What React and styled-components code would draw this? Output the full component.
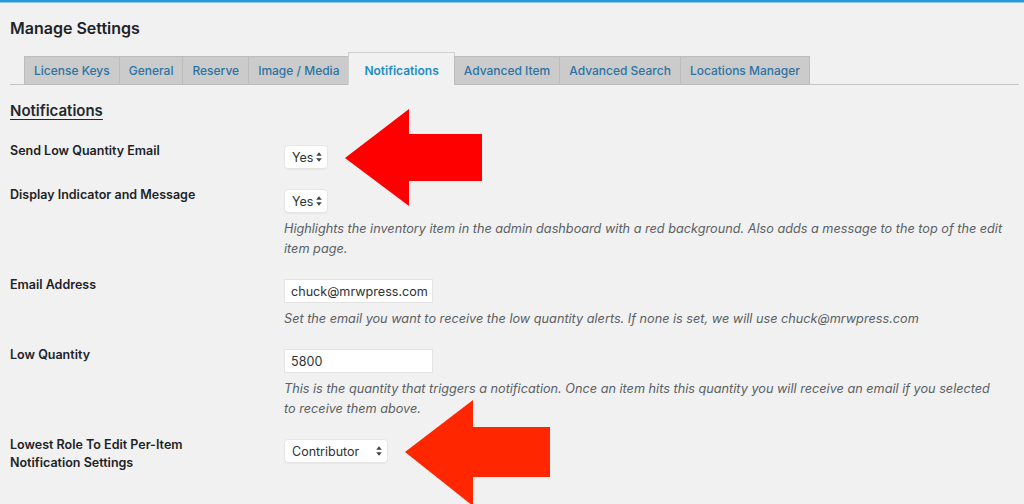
import React from "react";
import styled, { createGlobalStyle } from "styled-components";

const Global = createGlobalStyle`
  html, body { margin: 0; padding: 0; background: #f1f1f1; }
  body { font-family: Inter, "Noto Sans", Arial, sans-serif; color: #23282d; }
  * { box-sizing: border-box; }
`;

const Page = styled.div`
  position: relative;
  width: 1024px;
  height: 504px;
  overflow: hidden;
  background: #f1f1f1;
`;

const TopBar = styled.div`
  height: 3px;
  background: #2a98d6;
  border-bottom: 1px solid #8ec8ea;
`;

const Content = styled.div`
  padding: 0 5px 0 10px;
`;

const Title = styled.h1`
  margin: 15px 0 0;
  font-size: 16px;
  line-height: 20px;
  font-weight: 600;
  color: #1d2327;
`;

const TabBar = styled.nav`
  display: flex;
  align-items: flex-end;
  margin-top: 14px;
  padding-left: 14px;
  border-bottom: 1px solid #c5c5c5;
`;

const Tab = styled.a`
  display: flex;
  align-items: center;
  justify-content: center;
  height: ${(p) => (p.$active ? "33px" : "29px")};
  padding: ${(p) => (p.$active ? "4px 15px 0" : "0 9px")};
  margin-bottom: -1px;
  margin-left: -1px;
  border: 1px solid ${(p) => (p.$active ? "#d0d0d0" : "#bcbcbc")};
  border-bottom-color: ${(p) => (p.$active ? "#f1f1f1" : "#bcbcbc")};
  background: ${(p) => (p.$active ? "#f1f1f1" : "#cbcbcb")};
  color: ${(p) => (p.$active ? "#1e8cc6" : "#2b73a3")};
  font-size: 12px;
  font-weight: ${(p) => (p.$active ? 600 : 500)};
  text-decoration: none;
  white-space: nowrap;
  &:first-child { margin-left: 0; }
`;

const SectionTitle = styled.h2`
  margin: 16px 0 0;
  font-size: 15px;
  line-height: 20px;
  font-weight: 600;
  text-decoration: underline;
  text-underline-offset: 3px;
  color: #23282d;
`;

const Form = styled.div`
  margin-top: 14px;
`;

const Row = styled.div`
  display: grid;
  grid-template-columns: 274px 1fr;
  padding: 10px 0;
`;

const Label = styled.div`
  margin-top: -3px;
  font-size: 12.5px;
  line-height: 18px;
  font-weight: 600;
  color: #1d2327;
`;

const Field = styled.div`
  display: flex;
  flex-direction: column;
  align-items: flex-start;
`;

const Select = styled.div`
  display: flex;
  align-items: center;
  justify-content: space-between;
  gap: 3px;
  min-width: ${(p) => p.$width}px;
  height: 24px;
  padding: 0 5px 0 7px;
  background: #fff;
  border: 1px solid #e6e6e6;
  border-radius: 4px;
  box-shadow: 0 1px 1px rgba(0, 0, 0, 0.04);
  font-size: 12.5px;
  color: #2c3338;
`;

const Input = styled.div`
  display: flex;
  align-items: center;
  width: 149px;
  height: 24px;
  padding: 0 6px;
  background: #fff;
  border: 1px solid #e4e4e4;
  font-size: 12.6px;
  color: #2c3338;
`;

const Description = styled.p`
  margin: 6px 0 0;
  max-width: 730px;
  font-size: 12.7px;
  line-height: 20px;
  font-style: italic;
  color: #5a5f64;
`;

const Arrow = styled.svg`
  position: absolute;
  left: ${(p) => p.$x}px;
  top: ${(p) => p.$y}px;
`;

const Updown = () => (
  <svg width="6" height="10" viewBox="0 0 6 10">
    <path d="M3 0.3 L5.8 3.8 H0.2 Z" fill="#3c434a" />
    <path d="M3 9.7 L5.8 6.2 H0.2 Z" fill="#3c434a" />
  </svg>
);

const tabs = [
  "License Keys",
  "General",
  "Reserve",
  "Image / Media",
  "Notifications",
  "Advanced Item",
  "Advanced Search",
  "Locations Manager",
];

export default function App() {
  return (
    <>
      <Global />
      <Page>
        <TopBar />
        <Content>
          <Title>Manage Settings</Title>
          <TabBar>
            {tabs.map((t) => (
              <Tab key={t} $active={t === "Notifications"}>
                {t}
              </Tab>
            ))}
          </TabBar>
          <SectionTitle>Notifications</SectionTitle>
          <Form>
            <Row>
              <Label>Send Low Quantity Email</Label>
              <Field>
                <Select $width={44}>
                  <span>Yes</span>
                  <Updown />
                </Select>
              </Field>
            </Row>
            <Row>
              <Label>Display Indicator and Message</Label>
              <Field>
                <Select $width={44}>
                  <span>Yes</span>
                  <Updown />
                </Select>
                <Description>
                  Highlights the inventory item in the admin dashboard with a red background. Also adds a
                  message to the top of the edit item page.
                </Description>
              </Field>
            </Row>
            <Row>
              <Label>Email Address</Label>
              <Field>
                <Input>chuck@mrwpress.com</Input>
                <Description>
                  Set the email you want to receive the low quantity alerts. If none is set, we will use
                  chuck@mrwpress.com
                </Description>
              </Field>
            </Row>
            <Row>
              <Label>Low Quantity</Label>
              <Field>
                <Input>5800</Input>
                <Description>
                  This is the quantity that triggers a notification. Once an item hits this quantity you
                  will receive an email if you selected
                  <br />
                  to receive them above.
                </Description>
              </Field>
            </Row>
            <Row>
              <Label>
                Lowest Role To Edit Per-Item
                <br />
                Notification Settings
              </Label>
              <Field>
                <Select $width={104}>
                  <span>Contributor</span>
                  <Updown />
                </Select>
              </Field>
            </Row>
          </Form>
        </Content>
        <Arrow $x={345} $y={109} width="137" height="97" viewBox="0 0 137 97">
          <polygon points="0,49 64,0 64,25 137,25 137,72 64,72 64,97" fill="#ff0000" />
        </Arrow>
        <Arrow $x={405} $y={400} width="145" height="106" viewBox="0 0 145 106">
          <polygon points="0,52 68,0 68,27 145,27 145,77 68,77 68,106" fill="#ff2600" />
        </Arrow>
      </Page>
    </>
  );
}
